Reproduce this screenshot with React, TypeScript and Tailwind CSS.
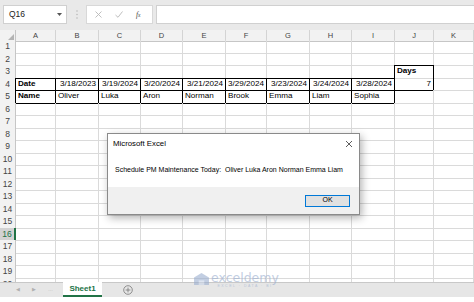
import { FC } from 'react'

const cols = ['A', 'B', 'C', 'D', 'E', 'F', 'G', 'H', 'I', 'J', 'K']
const gridCols = 'grid grid-cols-[16px_40px_43px_42px_42px_43px_41px_43px_42px_43px_39px_40px]'

const dates = ['3/18/2023', '3/19/2024', '3/20/2024', '3/21/2024', '3/29/2024', '3/23/2024', '3/24/2024', '3/28/2024']
const names = ['Oliver', 'Luka', 'Aron', 'Norman', 'Brook', 'Emma', 'Liam', 'Sophia']

// c: 0 = A ... 10 = K
const inTable = (r: number, c: number) => (r === 4 || r === 5) && c >= 0 && c <= 8
const blackRight = (r: number, c: number) =>
  inTable(r, c) || inTable(r, c + 1) || ((r === 3 || r === 4) && (c === 8 || c === 9))
const blackBottom = (r: number, c: number) =>
  inTable(r, c) || inTable(r + 1, c) || (c === 9 && (r === 2 || r === 4))

const cellText = (r: number, c: number) => {
  if (r === 3 && c === 9) return { t: 'Days', bold: true, right: false }
  if (r === 4 && c === 0) return { t: 'Date', bold: true, right: false }
  if (r === 5 && c === 0) return { t: 'Name', bold: true, right: false }
  if (r === 4 && c >= 1 && c <= 8) return { t: dates[c - 1], bold: false, right: true }
  if (r === 5 && c >= 1 && c <= 8) return { t: names[c - 1], bold: false, right: false }
  if (r === 4 && c === 9) return { t: '7', bold: false, right: true }
  return null
}

const Row: FC<{ r: number }> = ({ r }) => {
  const selected = r === 16
  return (
    <div className={`${gridCols} h-[12.5px] shrink-0`}>
      <div
        className={
          selected
            ? 'flex items-center justify-center bg-[#d2d2d2] text-[#217346] border-b border-[#c0c0c0] border-r-2 border-r-[#217346] text-[8.5px]'
            : `flex items-center justify-center bg-[#f2f2f2] text-[#444] border-b border-b-[#d4d4d4] border-r text-[8.5px] ${
                r === 4 || r === 5 ? 'border-r-black' : 'border-r-[#c6c6c6]'
              }`
        }
      >
        {r}
      </div>
      {cols.map((_, c) => {
        const txt = cellText(r, c)
        return (
          <div
            key={c}
            className={`flex items-center overflow-visible whitespace-nowrap border-r border-b px-[2px] text-[8.1px] text-black ${
              blackRight(r, c) ? 'border-r-black' : 'border-r-[#dadada]'
            } ${blackBottom(r, c) ? 'border-b-black' : 'border-b-[#dadada]'} ${
              txt?.right ? 'justify-end' : 'justify-start'
            } ${txt?.bold ? 'font-bold' : ''}`}
          >
            {txt?.t}
          </div>
        )
      })}
    </div>
  )
}

const Dialog: FC = () => (
  <div className="absolute left-[107px] top-[133px] w-[253px] h-[82px] bg-white border border-[#8a8a8a] shadow-[2px_3px_8px_rgba(0,0,0,0.3)] flex flex-col font-['Liberation_Sans',sans-serif]">
    <div className="flex items-center justify-between h-[19px] pl-[5px] pr-[5px] pt-[1px]">
      <span className="text-[7.8px] text-black">Microsoft Excel</span>
      <svg width="8" height="8" viewBox="0 0 8 8" className="mr-[1px]">
        <path d="M1 1 L7 7 M7 1 L1 7" stroke="#333" strokeWidth="0.8" />
      </svg>
    </div>
    <div className="flex-1 flex items-center pl-[7px] text-[7px] text-black whitespace-nowrap">
      Schedule PM Maintenance Today:&nbsp; Oliver Luka Aron Norman Emma Liam
    </div>
    <div className="h-[27px] bg-[#f0f0f0] flex items-center justify-end pr-[9px]">
      <div className="w-[45px] h-[12px] bg-[#e1e1e1] border border-[#0078d7] flex items-center justify-center text-[7px] text-black">
        OK
      </div>
    </div>
  </div>
)

export default function App() {
  return (
    <div className="relative w-[474px] h-[302px] overflow-hidden bg-white flex flex-col font-['Liberation_Sans',sans-serif]">
      {/* toolbar */}
      <div className="h-[30px] shrink-0 bg-[#e9e9e9] flex items-start pt-[5px] pl-[3px] gap-0">
        <div className="w-[64px] h-[19px] bg-white border border-[#d0d0d0] flex items-center justify-between pl-[5px] pr-[4px]">
          <span className="text-[8.5px] text-[#222]">Q16</span>
          <svg width="5" height="3" viewBox="0 0 5 3">
            <path d="M0 0 L5 0 L2.5 3 Z" fill="#555" />
          </svg>
        </div>
        <div className="w-[19px] h-[19px] flex items-center justify-center">
          <svg width="2" height="9" viewBox="0 0 2 9">
            <circle cx="1" cy="1" r="0.7" fill="#b0b0b0" />
            <circle cx="1" cy="4.5" r="0.7" fill="#b0b0b0" />
            <circle cx="1" cy="8" r="0.7" fill="#b0b0b0" />
          </svg>
        </div>
        <div className="w-[67px] h-[19px] bg-white border border-[#d8d8d8] flex items-center pl-[8px] gap-[13px]">
          <svg width="7" height="7" viewBox="0 0 7 7">
            <path d="M0.5 0.5 L6.5 6.5 M6.5 0.5 L0.5 6.5" stroke="#b8b8b8" strokeWidth="0.9" />
          </svg>
          <svg width="8" height="7" viewBox="0 0 8 7">
            <path d="M0.5 4 L3 6.3 L7.5 0.5" stroke="#b8b8b8" strokeWidth="0.9" fill="none" />
          </svg>
          <span className="text-[7.5px] italic text-[#444] font-['Liberation_Serif',serif]">
            f<span className="text-[5.5px]">x</span>
          </span>
        </div>
        <div className="ml-[3px] flex-1 h-[19px] bg-white border-t border-l border-b border-[#d0d0d0]" />
      </div>

      {/* grid */}
      <div className="flex-1 overflow-hidden flex flex-col">
        <div className={`${gridCols} h-[10px] shrink-0`}>
          <div className="bg-[#f2f2f2] border-r border-b border-[#c6c6c6] flex items-end justify-end p-[1px]">
            <svg width="6" height="6" viewBox="0 0 6 6">
              <path d="M6 0 L6 6 L0 6 Z" fill="#b4b4b4" />
            </svg>
          </div>
          {cols.map((c) => (
            <div
              key={c}
              className="bg-[#f2f2f2] border-r border-b border-r-[#d4d4d4] border-b-[#c6c6c6] flex items-center justify-center text-[7.5px] text-[#444]"
            >
              {c}
            </div>
          ))}
        </div>
        {Array.from({ length: 20 }, (_, i) => (
          <Row key={i} r={i + 1} />
        ))}
      </div>

      {/* sheet tabs */}
      <div className="h-[15px] shrink-0 bg-[#e6e6e6] border-t border-[#c8c8c8] flex items-stretch relative">
        <div className="w-[63px] flex items-center pl-[16px] gap-[12px] text-[5px] text-[#b0b0b0]">
          <span>◀</span>
          <span>▶</span>
          <span>…</span>
        </div>
        <div className="w-[39px] -mt-[1px] bg-white border-b-2 border-[#217346] flex items-center justify-center text-[8px] font-bold text-[#217346]">
          Sheet1
        </div>
        <div className="ml-[21px] flex items-center">
          <svg width="10" height="10" viewBox="0 0 10 10">
            <circle cx="5" cy="5" r="4.3" stroke="#777" strokeWidth="0.8" fill="none" />
            <path d="M5 2.6 V7.4 M2.6 5 H7.4" stroke="#777" strokeWidth="0.8" />
          </svg>
        </div>
      </div>
      <div className="h-[5px] shrink-0 bg-white" />

      {/* watermark */}
      <div className="absolute left-[193px] top-[272px] flex items-start gap-[1px] opacity-60 pointer-events-none">
        <svg width="17" height="14" viewBox="0 0 18 15">
          <path d="M1 6 L9 1 L17 6 L17 14 L1 14 Z" fill="#9aaed0" />
          <path d="M6 14 L6 9 L12 9 L12 14 Z" fill="#c9d4e8" />
        </svg>
        <div className="flex flex-col items-center">
          <span className="text-[12.5px] text-[#9aaed0] font-['DejaVu_Sans',sans-serif] leading-[12px]">exceldemy</span>
          <span className="text-[3.5px] leading-[5px] tracking-[1.5px] text-[#9aaed0]">EXCEL · DATA · BI</span>
        </div>
      </div>

      <Dialog />
    </div>
  )
}
